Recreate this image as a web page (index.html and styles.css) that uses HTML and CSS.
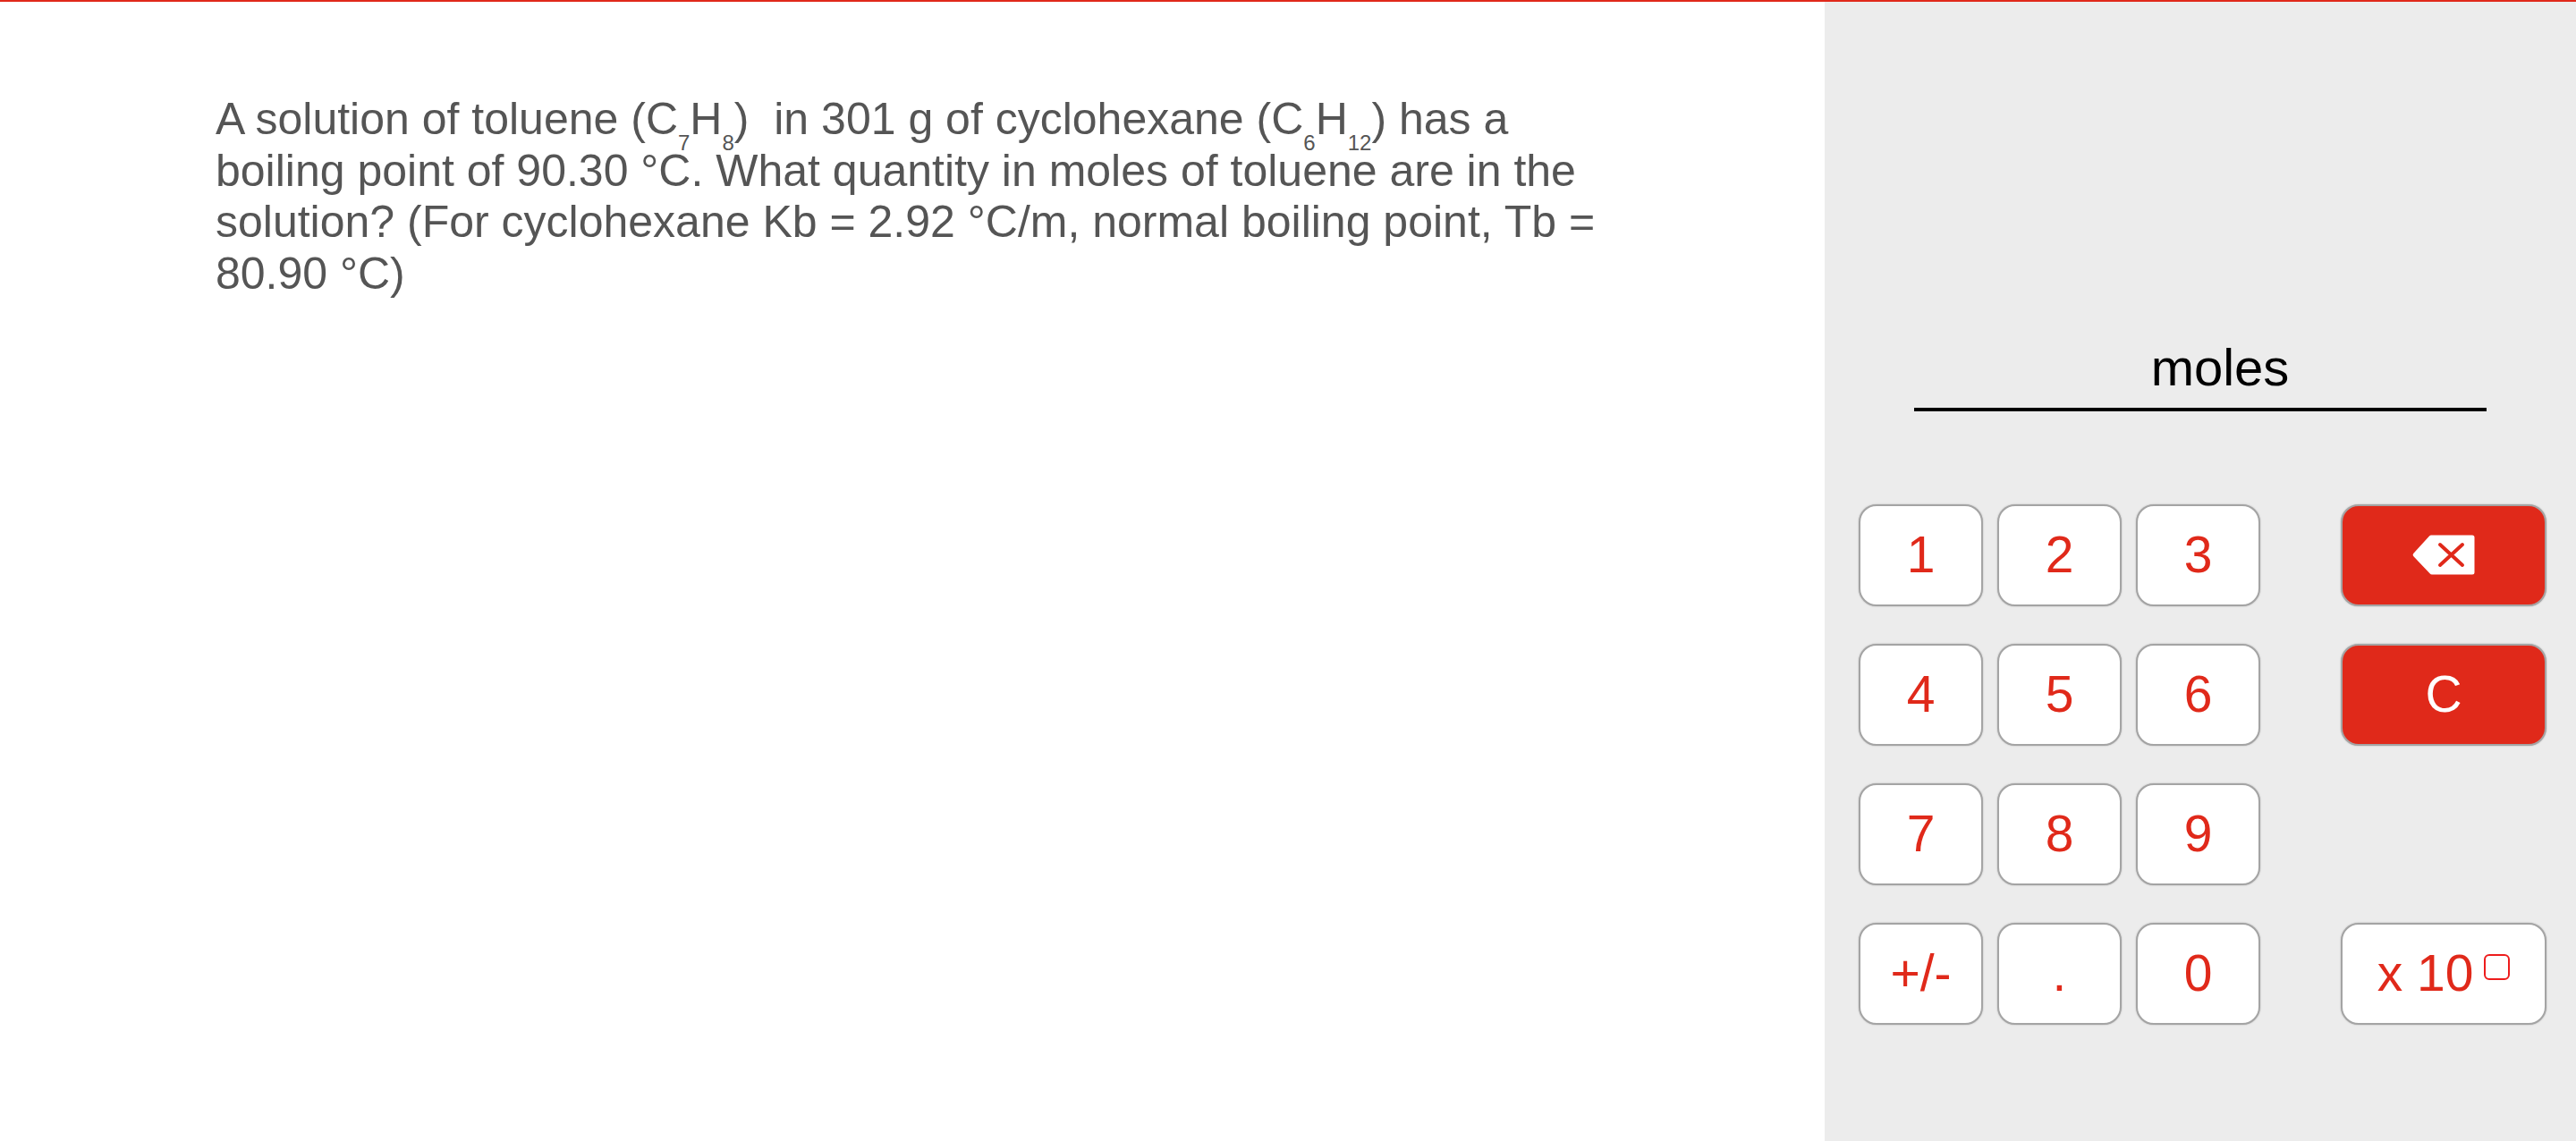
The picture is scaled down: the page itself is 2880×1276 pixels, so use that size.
FILE: index.html
```html
<!DOCTYPE html>
<html lang="en">
<head>
<meta charset="utf-8">
<title>Boiling point question</title>
<link rel="stylesheet" href="styles.css">
</head>
<body>
<div class="page">
  <main class="question">
    <p class="question-text">A solution of toluene (C<sub>7</sub>H<sub>8</sub>)&nbsp; in 301 g of cyclohexane (C<sub>6</sub>H<sub>12</sub>) has a boiling point of 90.30 °C. What quantity in moles of toluene are in the solution? (For cyclohexane Kb = 2.92 °C/m, normal boiling point, Tb = 80.90 °C)</p>
  </main>
  <aside class="panel">
    <div class="answer"><span class="unit">moles</span></div>
    <div class="keypad">
      <button class="key">1</button>
      <button class="key">2</button>
      <button class="key">3</button>
      <button class="key key-red key-side" aria-label="Backspace">
        <svg class="bs-icon" width="70" height="45" viewBox="0 0 70 45">
          <path d="M21 0.5 H67 Q69.5 0.5 69.5 3 V42 Q69.5 44.5 67 44.5 H22 Q20.5 44.5 19.5 43.3 L1.2 24 Q0 22.5 1.2 21 L19 1.6 Q20 0.5 21 0.5 Z" fill="#ffffff"/>
          <path d="M31 11 L56 34 M56 11 L31 34" stroke="#e0291a" stroke-width="4" stroke-linecap="round" fill="none"/>
        </svg>
      </button>
      <button class="key">4</button>
      <button class="key">5</button>
      <button class="key">6</button>
      <button class="key key-red key-side">C</button>
      <button class="key">7</button>
      <button class="key">8</button>
      <button class="key">9</button>
      <div class="key-spacer"></div>
      <button class="key">+/-</button>
      <button class="key">.</button>
      <button class="key">0</button>
      <button class="key key-side"><span class="x10">x 10<span class="exp-box"></span></span></button>
    </div>
  </aside>
</div>
</body>
</html>
```
FILE: styles.css
```css
html, body {
  margin: 0;
  padding: 0;
}
body {
  background: #ffffff;
  font-family: "Liberation Sans", Arial, sans-serif;
  border-top: 2px solid #e0291a;
}
.page {
  display: flex;
  min-height: calc(100vh - 2px);
}
.question {
  width: 2040px;
  flex: none;
  box-sizing: border-box;
  padding: 103px 0 0 241px;
}
.question-text {
  margin: 0;
  width: 1570px;
  font-size: 50px;
  line-height: 57.5px;
  color: #555555;
}
.question-text sub {
  font-size: 24px;
  line-height: 0;
  vertical-align: -18px;
}
.panel {
  flex: 1;
  background: #ececec;
  padding-top: 376px;
}
.answer {
  width: 640px;
  margin: 0 auto;
  box-sizing: border-box;
  padding-left: 44px;
  padding-bottom: 11px;
  border-bottom: 4px solid #000000;
  text-align: center;
}
.unit {
  font-size: 58px;
  line-height: 66.7px;
  color: #000000;
}
.keypad {
  margin-top: 104px;
  margin-left: 38px;
  display: grid;
  grid-template-columns: 139px 139px 139px 304px;
  grid-auto-rows: 114px;
  column-gap: 16px;
  row-gap: 42px;
}
.key {
  box-sizing: border-box;
  width: 139px;
  height: 114px;
  margin: 0;
  padding: 0;
  background: #ffffff;
  border: 2px solid #a4a4a4;
  border-radius: 20px;
  box-shadow: 0 0 2px rgba(0, 0, 0, 0.25);
  color: #e0291a;
  font-family: "Liberation Sans", Arial, sans-serif;
  font-size: 57px;
  line-height: 1;
  display: flex;
  align-items: center;
  justify-content: center;
}
.key-side {
  width: 230px;
  justify-self: end;
}
.key-red {
  background: #e0291a;
  color: #ffffff;
}
.bs-icon {
  display: block;
}
.x10 {
  white-space: nowrap;
}
.exp-box {
  display: inline-block;
  box-sizing: border-box;
  width: 29px;
  height: 29px;
  margin-left: 12px;
  border: 2px solid #ee1c1c;
  border-radius: 6px;
  vertical-align: 12px;
}
.key-spacer {
  height: 114px;
}
```
